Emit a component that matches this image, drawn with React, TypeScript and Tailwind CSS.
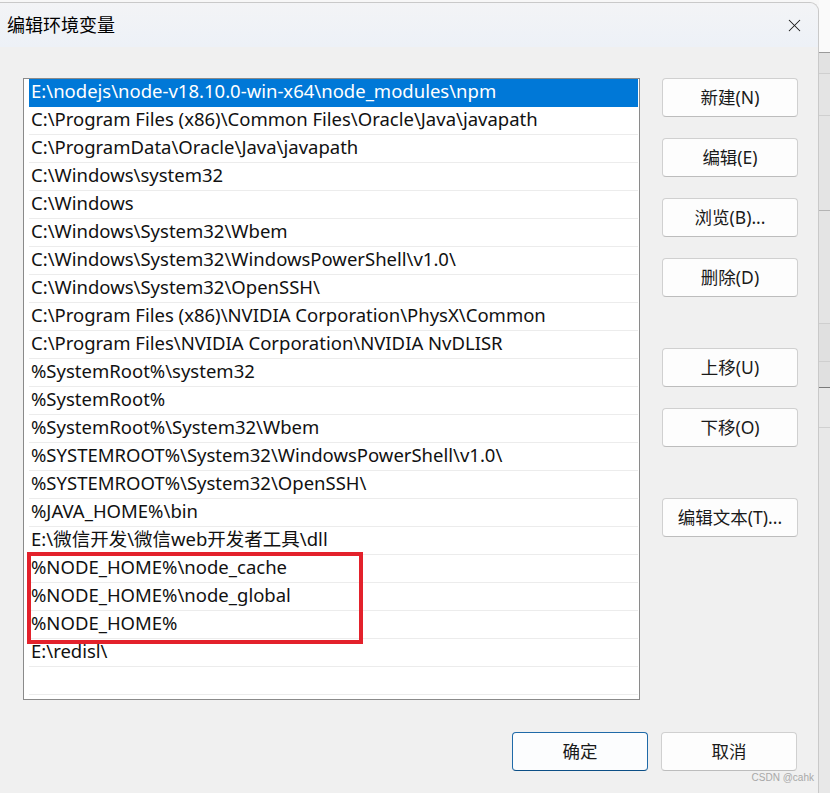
import { X } from "lucide-react";

const paths = [
  "E:\\nodejs\\node-v18.10.0-win-x64\\node_modules\\npm",
  "C:\\Program Files (x86)\\Common Files\\Oracle\\Java\\javapath",
  "C:\\ProgramData\\Oracle\\Java\\javapath",
  "C:\\Windows\\system32",
  "C:\\Windows",
  "C:\\Windows\\System32\\Wbem",
  "C:\\Windows\\System32\\WindowsPowerShell\\v1.0\\",
  "C:\\Windows\\System32\\OpenSSH\\",
  "C:\\Program Files (x86)\\NVIDIA Corporation\\PhysX\\Common",
  "C:\\Program Files\\NVIDIA Corporation\\NVIDIA NvDLISR",
  "%SystemRoot%\\system32",
  "%SystemRoot%",
  "%SystemRoot%\\System32\\Wbem",
  "%SYSTEMROOT%\\System32\\WindowsPowerShell\\v1.0\\",
  "%SYSTEMROOT%\\System32\\OpenSSH\\",
  "%JAVA_HOME%\\bin",
  "E:\\微信开发\\微信web开发者工具\\dll",
  "%NODE_HOME%\\node_cache",
  "%NODE_HOME%\\node_global",
  "%NODE_HOME%",
  "E:\\redisl\\",
  "",
];

const font = { fontFamily: '"Noto Sans", "Noto Sans CJK SC", sans-serif' };

function WinButton({ label, primary = false }: { label: string; primary?: boolean }) {
  return (
    <button
      className={
        "flex h-[39px] w-[136px] items-center justify-center rounded-[4px] border pb-[1px] text-[17.5px] text-[#1a1a1a] " +
        (primary
          ? "border-[#1f6aa8] border-b-[#0b4f86] bg-[#fcfdfe]"
          : "border-[#d0d0d0] border-b-[#bdbdbd] bg-[#fdfdfd]")
      }
    >
      {label}
    </button>
  );
}

export default function App() {
  return (
    <div className="flex h-[793px] w-[830px] overflow-hidden bg-[#f7f7f7]" style={font}>
      {/* dialog */}
      <div className="relative mt-[2px] flex w-[819px] flex-col rounded-tr-[9px] border-r border-t border-[#c9c9c9] bg-[#f0f0f0]">
        <div className="flex h-[44px] items-center justify-between rounded-tr-[9px] bg-gradient-to-b from-[#f3f4f6] to-[#edf1f7] pl-[7px] pr-[13px]">
          <span className="text-[18px] text-black">编辑环境变量</span>
          <X className="h-[21px] w-[21px] text-[#1a1a1a]" strokeWidth={1.2} />
        </div>

        <div className="flex pl-[23px] pt-[31px]">
          <div className="relative h-[622px] w-[617px] border border-[#8a8a8a] bg-white pl-[5px] pr-[1px]">
            {paths.map((p, i) => (
              <div
                key={i}
                className={
                  "flex h-[28px] items-center border-b pb-[3px] pl-[2px] text-[18.5px] leading-none whitespace-nowrap " +
                  (i === 0
                    ? "border-[#0078d7] bg-[#0078d7] text-white"
                    : "border-[#ececec] text-[#111]")
                }
              >
                {p}
              </div>
            ))}
            <div className="absolute left-[3px] top-[473px] h-[92px] w-[336px] border-[4px] border-[#e3212b]" />
          </div>

          <div className="ml-[22px] flex flex-col">
            <WinButton label="新建(N)" />
            <div className="mt-[21px]">
              <WinButton label="编辑(E)" />
            </div>
            <div className="mt-[21px]">
              <WinButton label="浏览(B)..." />
            </div>
            <div className="mt-[21px]">
              <WinButton label="删除(D)" />
            </div>
            <div className="mt-[51px]">
              <WinButton label="上移(U)" />
            </div>
            <div className="mt-[21px]">
              <WinButton label="下移(O)" />
            </div>
            <div className="mt-[51px]">
              <WinButton label="编辑文本(T)..." />
            </div>
          </div>
        </div>

        <div className="mt-[32px] flex justify-end gap-[13px] pr-[21px]">
          <WinButton label="确定" primary />
          <WinButton label="取消" />
        </div>

        <span
          className="absolute bottom-[8px] right-[4px] text-[10px] text-[#a8a8a8]"
          style={{ fontFamily: '"Liberation Sans", sans-serif' }}
        >
          CSDN @cahk
        </span>
      </div>

      {/* window behind */}
      <div className="flex flex-1 flex-col">
        <div className="h-[52px] bg-[#fafafa]" />
        <div className="h-[21px] border-t border-[#9a9a9a] bg-[#e2e2e2]" />
        <div className="h-[42px] border-t border-[#cfcfcf] bg-[#e4e4e4]" />
        <div className="h-[95px] border-t border-[#cfcfcf] bg-[#e4e4e4]" />
        <div className="h-[113px] border-t border-[#b4b4b4] bg-[#e4e4e4]" />
        <div className="h-[38px] border-t border-[#cfcfcf] bg-[#e0e0e0]" />
        <div className="h-[26px] border-t border-[#cfcfcf] bg-[#e0e0e0]" />
        <div className="h-[40px] border-t border-[#7a7a7a] bg-[#e8e8e8]" />
        <div className="flex-1 border-t border-[#d0d0d0] bg-[#e8e8e8]" />
      </div>
    </div>
  );
}
